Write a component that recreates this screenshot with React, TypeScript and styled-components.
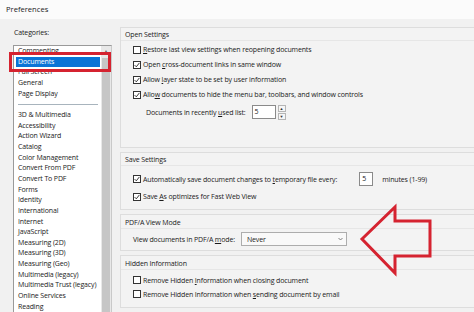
import React, { FC, ReactNode } from "react";
import styled, { createGlobalStyle } from "styled-components";

const GlobalStyle = createGlobalStyle`
  html, body {
    margin: 0;
    padding: 0;
    width: 474px;
    height: 312px;
    overflow: hidden;
    background: #f0f0f0;
  }
  * {
    box-sizing: border-box;
  }
`;

const Window = styled.div`
  position: relative;
  width: 474px;
  height: 312px;
  overflow: hidden;
  background: #f1f1f1;
  font-family: "Open Sans", "Noto Sans", sans-serif;
  font-size: 7px;
  letter-spacing: -0.14px;
  color: #1a1a1a;
`;

const TitleBar = styled.div`
  height: 19px;
  padding: 4px 0 0 6px;
  background: #fbfbfb;
  font-size: 7.6px;
  line-height: 10px;
  letter-spacing: 0;
  color: #222;
`;

const Body = styled.div`
  display: flex;
  align-items: flex-start;
`;

const Sidebar = styled.div`
  width: 120px;
  flex: none;
  padding: 8px 0 0 13px;
`;

const SideLabel = styled.div`
  height: 18px;
  padding-left: 1px;
  line-height: 12px;
`;

const ListBox = styled.div`
  position: relative;
  display: flex;
  width: 99px;
  height: 280px;
  border: 1px solid #9a9a9a;
  border-right-color: #c9c9c9;
  background: #ffffff;
`;

const ListItems = styled.div`
  flex: 1;
  padding: 0 1px 0 2px;
  overflow: hidden;
`;

const ListItem = styled.div<{ $selected?: boolean }>`
  height: 10.67px;
  line-height: 10.67px;
  padding-left: 2px;
  white-space: nowrap;
  background: ${(p) => (p.$selected ? "#0a74d6" : "transparent")};
  color: ${(p) => (p.$selected ? "#ffffff" : "#1a1a1a")};
`;

const Separator = styled.div`
  height: 10.67px;
  display: flex;
  align-items: center;
  padding: 0 2px;
  &::after {
    content: "";
    flex: 1;
    height: 1px;
    background: #a8b4bd;
  }
`;

const ScrollBar = styled.div`
  width: 10px;
  flex: none;
  display: flex;
  flex-direction: column;
  background: #e8e8e8;
`;

const ScrollArrow = styled.div`
  height: 11px;
  font-size: 5px;
  line-height: 11px;
  text-align: center;
  color: #606060;
`;

const Thumb = styled.div`
  flex: 1;
  margin: 1px 1px 0;
  background: #c6c6c6;
`;

const RedFrame = styled.div`
  position: absolute;
  left: -5px;
  top: 6px;
  width: 102px;
  height: 20px;
  border: 3px solid #d52330;
`;

const Main = styled.div`
  flex: 1;
  padding-top: 8px;
  display: flex;
  flex-direction: column;
  gap: 4px;
`;

const GroupBox = styled.div<{ $height: number }>`
  height: ${(p) => p.$height}px;
  margin-right: -6px;
  border: 1px solid #dddddd;
  background: #f3f3f3;
`;

const GroupTitle = styled.div<{ $top?: number }>`
  height: ${(p) => 13 + (p.$top ?? 0)}px;
  padding: ${(p) => p.$top ?? 0}px 0 0 4px;
  line-height: 13px;
  border-bottom: 1px solid #e6e6e6;
`;

const GroupContent = styled.div<{ $top: number }>`
  padding: ${(p) => p.$top}px 0 0 12px;
  display: flex;
  flex-direction: column;
`;

const Row = styled.div<{ $h?: number; $indent?: number }>`
  height: ${(p) => p.$h ?? 15}px;
  padding-left: ${(p) => p.$indent ?? 0}px;
  display: flex;
  align-items: center;
  white-space: nowrap;
`;

const Box = styled.span`
  width: 8px;
  height: 8px;
  flex: none;
  margin-right: 2px;
  border: 1px solid #333;
  background: #fff;
  display: flex;
  align-items: center;
  justify-content: center;
`;

const SpinField = styled.span<{ $w: number; $gap?: number }>`
  width: ${(p) => p.$w}px;
  height: 14px;
  margin-left: ${(p) => p.$gap ?? 5}px;
  padding-left: 2px;
  border: 1px solid #8a8a8a;
  background: #fff;
  line-height: 12px;
`;

const Spinner = styled.span`
  width: 8px;
  height: 14px;
  margin-left: 2px;
  display: flex;
  flex-direction: column;
  gap: 1px;
`;

const SpinButton = styled.span`
  flex: 1;
  border: 1px solid #b5b5b5;
  background: #f6f6f6;
  font-size: 4px;
  line-height: 5px;
  text-align: center;
  color: #333;
`;

const Suffix = styled.span`
  margin-left: 9px;
`;

const Select = styled.span`
  width: 106px;
  height: 14px;
  margin-left: 6px;
  padding: 0 3px 0 5px;
  display: flex;
  align-items: center;
  justify-content: space-between;
  border: 1px solid #adadad;
  background: #f9f9f9;
`;

const ArrowOverlay = styled.svg`
  position: absolute;
  left: 0;
  top: 0;
  pointer-events: none;
`;

const Check: FC<{ checked?: boolean }> = ({ checked }) => (
  <Box>
    {checked && (
      <svg width="6" height="6" viewBox="0 0 6 6">
        <path d="M0.6 3.1 L2.3 4.8 L5.4 0.9" fill="none" stroke="#222" strokeWidth="0.9" />
      </svg>
    )}
  </Box>
);

const CheckRow: FC<{ checked?: boolean; h?: number; children: ReactNode }> = ({
  checked,
  h,
  children,
}) => (
  <Row $h={h}>
    <Check checked={checked} />
    <span>{children}</span>
  </Row>
);

const categoriesTop = ["Commenting", "Documents", "Full Screen", "General", "Page Display"];
const categoriesRest = [
  "3D & Multimedia",
  "Accessibility",
  "Action Wizard",
  "Catalog",
  "Color Management",
  "Convert From PDF",
  "Convert To PDF",
  "Forms",
  "Identity",
  "International",
  "Internet",
  "JavaScript",
  "Measuring (2D)",
  "Measuring (3D)",
  "Measuring (Geo)",
  "Multimedia (legacy)",
  "Multimedia Trust (legacy)",
  "Online Services",
  "Reading",
];

const App: FC = () => {
  return (
    <Window>
      <GlobalStyle />
      <TitleBar>Preferences</TitleBar>
      <Body>
        <Sidebar>
          <SideLabel>Categories:</SideLabel>
          <ListBox>
            <ListItems>
              {categoriesTop.map((c) => (
                <ListItem key={c} $selected={c === "Documents"}>
                  {c}
                </ListItem>
              ))}
              <Separator />
              {categoriesRest.map((c) => (
                <ListItem key={c}>{c}</ListItem>
              ))}
            </ListItems>
            <ScrollBar>
              <ScrollArrow>▲</ScrollArrow>
              <Thumb />
            </ScrollBar>
            <RedFrame />
          </ListBox>
        </Sidebar>

        <Main>
          <GroupBox $height={121}>
            <GroupTitle>Open Settings</GroupTitle>
            <GroupContent $top={1}>
              <CheckRow>
                <u>R</u>estore last view settings when reopening documents
              </CheckRow>
              <CheckRow checked>
                Open <u>c</u>ross-document links in same window
              </CheckRow>
              <CheckRow checked>
                Allow <u>l</u>ayer state to be set by user information
              </CheckRow>
              <CheckRow checked>
                Allo<u>w</u> documents to hide the menu bar, toolbars, and window controls
              </CheckRow>
              <Row $h={20} $indent={13}>
                <span>
                  Documents in recently <u>u</u>sed list:
                </span>
                <SpinField $w={24} $gap={6}>5</SpinField>
                <Spinner>
                  <SpinButton>▲</SpinButton>
                  <SpinButton>▼</SpinButton>
                </Spinner>
              </Row>
            </GroupContent>
          </GroupBox>

          <GroupBox $height={58}>
            <GroupTitle>Save Settings</GroupTitle>
            <GroupContent $top={4}>
              <Row $h={18}>
                <Check checked />
                <span>
                  Automatically save document changes to <u>t</u>emporary file every:
                </span>
                <SpinField $w={14} $gap={22}>
                  5
                </SpinField>
                <Suffix>minutes (1-99)</Suffix>
              </Row>
              <CheckRow checked h={17}>
                Save <u>A</u>s optimizes for Fast Web View
              </CheckRow>
            </GroupContent>
          </GroupBox>

          <GroupBox $height={37}>
            <GroupTitle $top={1}>PDF/A View Mode</GroupTitle>
            <GroupContent $top={1}>
              <Row $h={18}>
                <span>
                  View documents in PDF/A <u>m</u>ode:
                </span>
                <Select>
                  <span>Never</span>
                  <svg width="5" height="4" viewBox="0 0 5 4">
                    <path d="M0.5 1 L2.5 3 L4.5 1" fill="none" stroke="#666" strokeWidth="0.8" />
                  </svg>
                </Select>
              </Row>
            </GroupContent>
          </GroupBox>

          <GroupBox $height={53}>
            <GroupTitle $top={1}>Hidden Information</GroupTitle>
            <GroupContent $top={3}>
              <CheckRow h={14}>
                Remove Hidden <u>I</u>nformation when closing document
              </CheckRow>
              <CheckRow h={14}>
                Remove Hidden Information when <u>s</u>ending document by email
              </CheckRow>
            </GroupContent>
          </GroupBox>
        </Main>
      </Body>

      <ArrowOverlay width="474" height="312" viewBox="0 0 474 312">
        <polygon
          points="362,239 395,207 395,221 430,221 430,256 395,256 395,273"
          fill="none"
          stroke="#d52330"
          strokeWidth="3"
          strokeLinejoin="miter"
        />
      </ArrowOverlay>
    </Window>
  );
};

export default App;
